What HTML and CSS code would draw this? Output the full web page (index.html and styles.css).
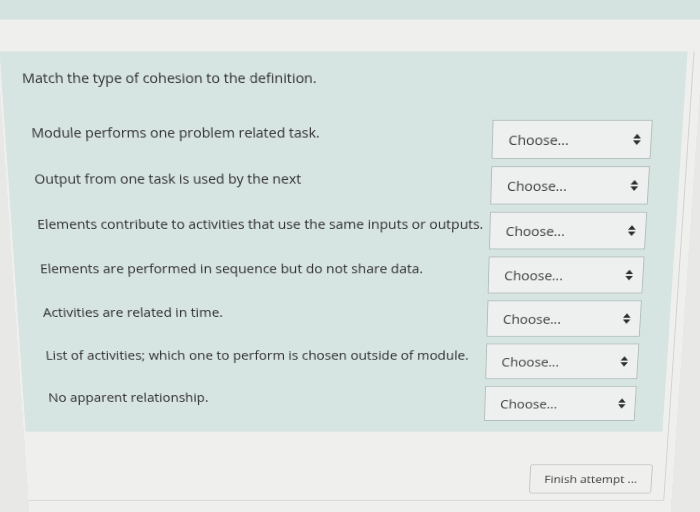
FILE: index.html
```html
<!DOCTYPE html>
<html lang="en">
  <head>
    <meta charset="UTF-8" />
    <title>Quiz - Cohesion</title>
    <link rel="stylesheet" href="styles.css">
  </head>
  <body>
    <div class="stage">
      <div class="prev-question"></div>

      <div class="card">
        <div class="que">
          <p class="qtext">Match the type of cohesion to the definition.</p>

          <div class="answers">
            <div class="row">
              <span class="label">Module performs one problem related task.</span>
              <div class="select"><span>Choose...</span><svg class="arrows" width="8" height="12" viewBox="0 0 8 12"><path d="M4 0 L8 5 L0 5 Z M0 7 L8 7 L4 12 Z"/></svg></div>
            </div>
            <div class="row">
              <span class="label">Output from one task is used by the next</span>
              <div class="select"><span>Choose...</span><svg class="arrows" width="8" height="12" viewBox="0 0 8 12"><path d="M4 0 L8 5 L0 5 Z M0 7 L8 7 L4 12 Z"/></svg></div>
            </div>
            <div class="row">
              <span class="label">Elements contribute to activities that use the same inputs or outputs.</span>
              <div class="select"><span>Choose...</span><svg class="arrows" width="8" height="12" viewBox="0 0 8 12"><path d="M4 0 L8 5 L0 5 Z M0 7 L8 7 L4 12 Z"/></svg></div>
            </div>
            <div class="row">
              <span class="label">Elements are performed in sequence but do not share data.</span>
              <div class="select"><span>Choose...</span><svg class="arrows" width="8" height="12" viewBox="0 0 8 12"><path d="M4 0 L8 5 L0 5 Z M0 7 L8 7 L4 12 Z"/></svg></div>
            </div>
            <div class="row">
              <span class="label">Activities are related in time.</span>
              <div class="select"><span>Choose...</span><svg class="arrows" width="8" height="12" viewBox="0 0 8 12"><path d="M4 0 L8 5 L0 5 Z M0 7 L8 7 L4 12 Z"/></svg></div>
            </div>
            <div class="row">
              <span class="label">List of activities; which one to perform is chosen outside of module.</span>
              <div class="select"><span>Choose...</span><svg class="arrows" width="8" height="12" viewBox="0 0 8 12"><path d="M4 0 L8 5 L0 5 Z M0 7 L8 7 L4 12 Z"/></svg></div>
            </div>
            <div class="row">
              <span class="label">No apparent relationship.</span>
              <div class="select"><span>Choose...</span><svg class="arrows" width="8" height="12" viewBox="0 0 8 12"><path d="M4 0 L8 5 L0 5 Z M0 7 L8 7 L4 12 Z"/></svg></div>
            </div>
          </div>
        </div>

        <div class="actions">
          <button class="finish">Finish attempt ...</button>
        </div>
      </div>
    </div>
  </body>
</html>
```

FILE: styles.css
```css
body {
  margin: 0;
  background-color: #e8e8e6;
  font-family: "Open Sans", "Noto Sans", sans-serif;
  color: #2f2f2f;
  overflow: hidden;
}

/* the screen was photographed from above, so tilt the page back a little */
.stage {
  width: 712px;
  height: 620px;
  margin-left: -6px;
  background-color: #efefed;
  transform-origin: 50% 0;
  transform: perspective(1000px) rotateX(-11deg);
}

.prev-question {
  height: 20px;
  background-color: #d5e3e0;
}

.card {
  margin-top: 33px;
  width: 697px;
  border-right: 1px solid #cfd3d1;
  border-bottom: 1px solid #cfd3d1;
  padding-right: 6px;
}

.que {
  margin-left: 2px;
  background-color: #d7e5e2;
  padding: 17px 31px 13px 21px;
}

.qtext {
  margin: 0;
  font-size: 14.5px;
  line-height: 22px;
}

.answers {
  margin-top: 33px;
  padding-left: 6px;
  display: flex;
  flex-direction: column;
  gap: 8px;
}

.row {
  display: grid;
  grid-template-columns: 1fr 164px;
  height: 42px;
}

.label {
  font-size: 14.5px;
  line-height: 22px;
  padding-top: 3px;
}

.select {
  display: flex;
  align-items: center;
  justify-content: space-between;
  padding: 0 10px 0 16px;
  background-color: #eef0ef;
  border: 1px solid #b3bfbc;
  font-size: 14.5px;
  color: #3d3d3d;
}

.arrows {
  fill: #2f2f2f;
}

.actions {
  display: flex;
  justify-content: flex-end;
  padding: 40px 8px 8px 0;
}

.finish {
  width: 135px;
  height: 36px;
  background-color: #efefed;
  border: 1px solid #c4c4c2;
  border-radius: 3px;
  font-family: "Open Sans", "Noto Sans", sans-serif;
  font-size: 13.2px;
  color: #3d3d3d;
}
```
